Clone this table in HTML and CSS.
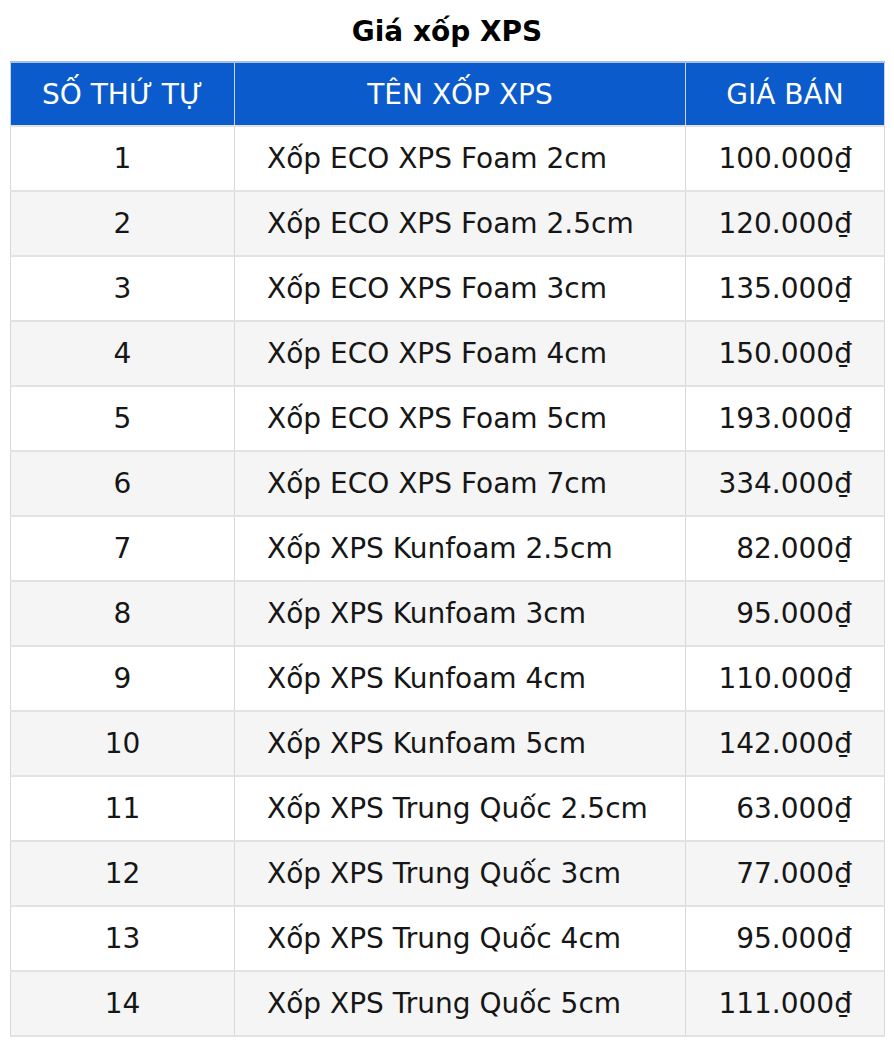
FILE: index.html
```html
<!DOCTYPE html>
<html lang="vi">
<head>
<meta charset="utf-8">
<link rel="stylesheet" href="styles.css">
</head>
<body>
<div class="wrap">
  <h2 class="title">Giá xốp XPS</h2>
  <table class="price-table">
    <thead>
      <tr><th class="c-no">SỐ THỨ TỰ</th><th class="c-name">TÊN XỐP XPS</th><th class="c-price">GIÁ BÁN</th></tr>
    </thead>
    <tbody>
      <tr><td class="c-no">1</td><td class="c-name">Xốp ECO XPS Foam 2cm</td><td class="c-price">100.000₫</td></tr>
      <tr><td class="c-no">2</td><td class="c-name">Xốp ECO XPS Foam 2.5cm</td><td class="c-price">120.000₫</td></tr>
      <tr><td class="c-no">3</td><td class="c-name">Xốp ECO XPS Foam 3cm</td><td class="c-price">135.000₫</td></tr>
      <tr><td class="c-no">4</td><td class="c-name">Xốp ECO XPS Foam 4cm</td><td class="c-price">150.000₫</td></tr>
      <tr><td class="c-no">5</td><td class="c-name">Xốp ECO XPS Foam 5cm</td><td class="c-price">193.000₫</td></tr>
      <tr><td class="c-no">6</td><td class="c-name">Xốp ECO XPS Foam 7cm</td><td class="c-price">334.000₫</td></tr>
      <tr><td class="c-no">7</td><td class="c-name">Xốp XPS Kunfoam 2.5cm</td><td class="c-price">82.000₫</td></tr>
      <tr><td class="c-no">8</td><td class="c-name">Xốp XPS Kunfoam 3cm</td><td class="c-price">95.000₫</td></tr>
      <tr><td class="c-no">9</td><td class="c-name">Xốp XPS Kunfoam 4cm</td><td class="c-price">110.000₫</td></tr>
      <tr><td class="c-no">10</td><td class="c-name">Xốp XPS Kunfoam 5cm</td><td class="c-price">142.000₫</td></tr>
      <tr><td class="c-no">11</td><td class="c-name">Xốp XPS Trung Quốc 2.5cm</td><td class="c-price">63.000₫</td></tr>
      <tr><td class="c-no">12</td><td class="c-name">Xốp XPS Trung Quốc 3cm</td><td class="c-price">77.000₫</td></tr>
      <tr><td class="c-no">13</td><td class="c-name">Xốp XPS Trung Quốc 4cm</td><td class="c-price">95.000₫</td></tr>
      <tr><td class="c-no">14</td><td class="c-name">Xốp XPS Trung Quốc 5cm</td><td class="c-price">111.000₫</td></tr>
    </tbody>
  </table>
</div>
</body>
</html>
```

FILE: styles.css
```css
html, body {
  margin: 0;
  padding: 0;
  background: #ffffff;
}
body {
  font-family: "DejaVu Sans", Verdana, sans-serif;
  color: #161616;
}
.wrap {
  padding: 14px 10px 0 10px;
}
.title {
  margin: 0 0 11px 0;
  text-align: center;
  font-size: 28px;
  font-weight: bold;
  line-height: 36px;
  color: #000;
}
.price-table {
  width: 874px;
  border-collapse: collapse;
  table-layout: fixed;
}
.price-table th,
.price-table td {
  border-left: 1px solid #d8d8d8;
  border-right: 1px solid #d8d8d8;
  border-top: 2px solid #e2e2e2;
  border-bottom: 2px solid #e2e2e2;
  height: 65px;
  padding: 0;
  font-size: 28px;
  font-weight: normal;
  box-sizing: border-box;
}
.price-table th {
  height: 64px;
  background: #0b5bcd;
  color: #ffffff;
  text-align: center;
  border-left-color: #c9d3e6;
  border-right-color: #c9d3e6;
  border-top-color: #a9c0e6;
}
.price-table tbody tr:nth-child(even) td {
  background: #f5f5f5;
}
.c-no { width: 224px; text-align: center; }
.c-name { width: 451px; text-align: left; }
.price-table td.c-name { padding-left: 32px; }
.c-price { width: 199px; }
.price-table td.c-price { text-align: right; padding-right: 32px; }
```
